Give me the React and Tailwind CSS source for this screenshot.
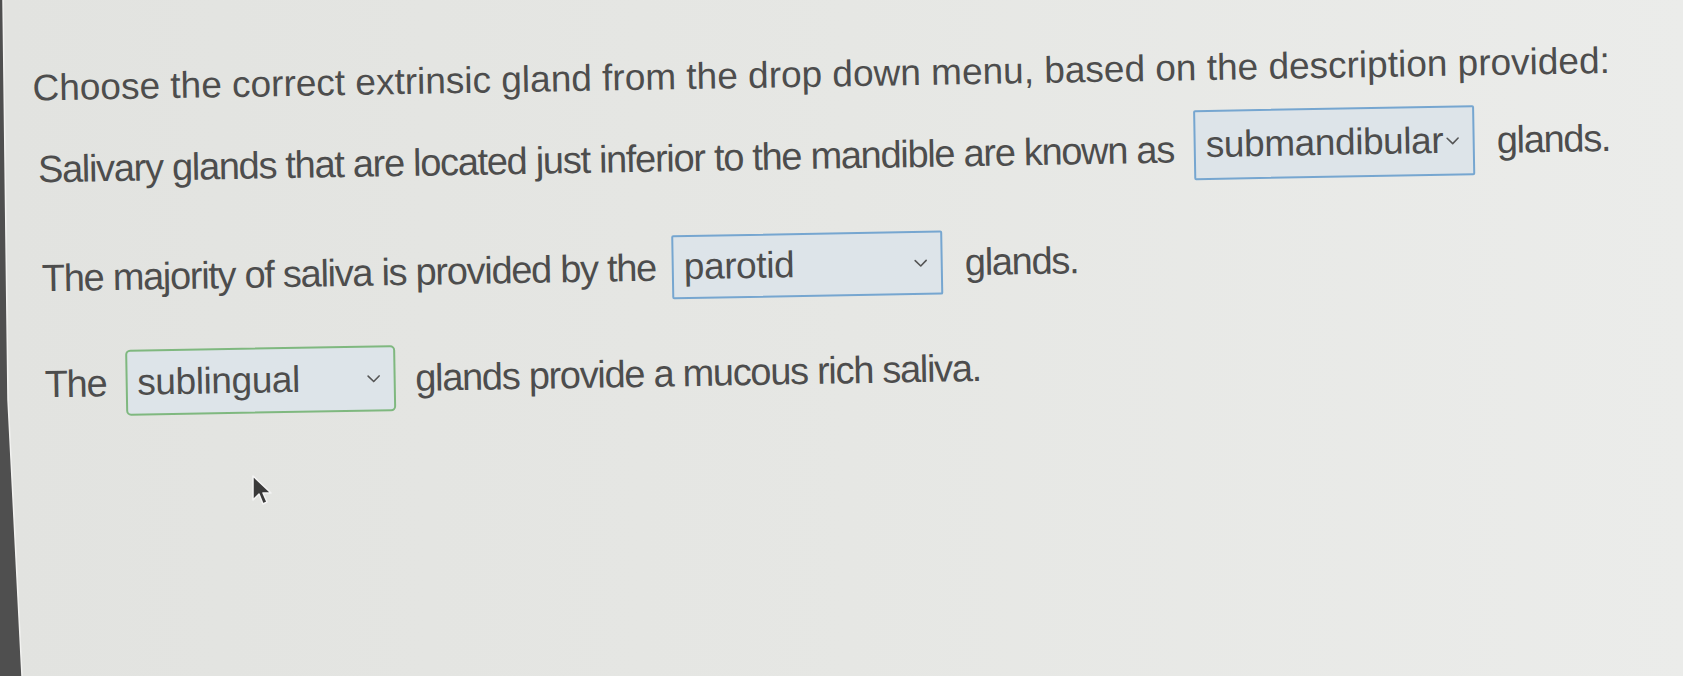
import React from "react";

function Chevron() {
  return (
    <svg width="14" height="9" viewBox="0 0 14 9" className="shrink-0">
      <path d="M1.5 1.5 L7 7 L12.5 1.5" fill="none" stroke="#555" strokeWidth="1.6" strokeLinecap="round" strokeLinejoin="round" />
    </svg>
  );
}

function Select({ value, width, height, border, rounded }) {
  return (
    <div
      className={`flex items-center justify-between shrink-0 bg-[#dde4e9] border-2 pl-[10px] pr-[13px] text-[37px] tracking-[-0.4px] ${border} ${rounded}`}
      style={{ width, height }}
    >
      <span className="leading-none pb-[2px]">{value}</span>
      <Chevron />
    </div>
  );
}

export default function App() {
  return (
    <div className="relative w-[1683px] h-[676px] overflow-hidden bg-gradient-to-r from-[#e2e3e0] via-[#e6e7e4] to-[#ebecea]">
      <div
        className="origin-top-left -rotate-1 text-[#4d4d4d] text-[37px] leading-none pl-[32px]"
        style={{ fontFamily: '"Liberation Sans", Arial, sans-serif' }}
      >
        <div className="h-[60px] mt-[58px] flex items-center whitespace-nowrap">
          Choose the correct extrinsic gland from the drop down menu, based on the description provided:
        </div>
        <div className="h-[72px] mt-[12px] flex items-center whitespace-nowrap pl-[4px] text-[38px] tracking-[-1.3px]">
          <span className="pt-[8px]">Salivary glands that are located just inferior to the mandible are known as</span>
          <div className="ml-[20px]">
            <Select value="submandibular" width={281} height={70} border="border-[#76a6d0]" rounded="rounded-[2px]" />
          </div>
          <span className="ml-[22px]">glands.</span>
        </div>
        <div className="h-[66px] mt-[44px] flex items-center whitespace-nowrap pl-[6px] text-[38px] tracking-[-1.3px]">
          <span>The majority of saliva is provided by the</span>
          <div className="ml-[16px]">
            <Select value="parotid" width={271} height={64} border="border-[#76a6d0]" rounded="rounded-[2px]" />
          </div>
          <span className="ml-[22px]">glands.</span>
        </div>
        <div className="h-[66px] mt-[40px] flex items-center whitespace-nowrap pl-[7px] text-[38px] tracking-[-1.3px]">
          <span>The</span>
          <div className="ml-[19px]">
            <Select value="sublingual" width={270} height={66} border="border-[#7fb87f]" rounded="rounded-[5px]" />
          </div>
          <span className="ml-[20px]">glands provide a mucous rich saliva.</span>
        </div>
      </div>

      <svg className="absolute left-[250px] top-[474px]" width="26" height="34" viewBox="0 0 26 34">
        <path d="M3 2 L3 26 L9 20 L13 30 L17 28 L13 19 L21 19 Z" fill="#3a3a3a" stroke="#f4f4f4" strokeWidth="1.5" strokeLinejoin="round" />
      </svg>

      <svg className="absolute left-0 top-0" width="30" height="676" viewBox="0 0 30 676">
        <polygon points="0,0 3,0 8,400 22,676 0,676" fill="#4f4f4f" />
        <polyline points="3,0 8,400 22,676" fill="none" stroke="#f2f2f0" strokeWidth="1.5" />
      </svg>
    </div>
  );
}
